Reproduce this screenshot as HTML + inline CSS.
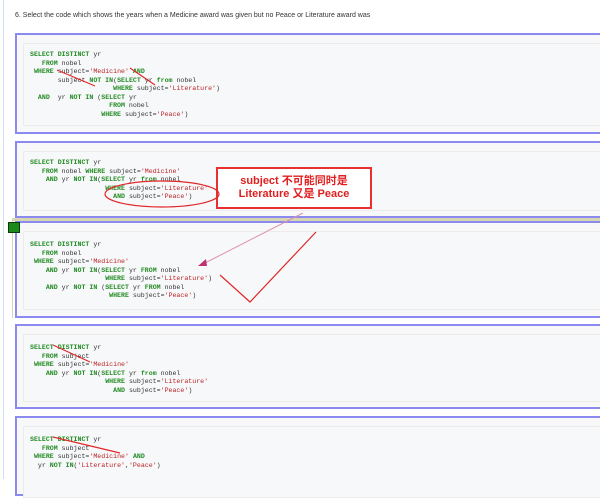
<!DOCTYPE html>
<html><head><meta charset="utf-8"><style>
body{margin:0;width:600px;height:479px;overflow:hidden;background:#fff;position:relative;font-family:"Liberation Sans",sans-serif}
.vl{position:absolute;left:3px;top:0;width:1px;height:479px;background:#cfe0f0}
.q{position:absolute;left:15px;top:12px;font-size:7px;color:#333}
.box{position:absolute;left:15px;width:600px;border:2px solid #8a8af0;background:#f8f8f8;box-sizing:border-box}
.in{position:absolute;left:6px;right:0;background:#f7f8fa;border:1px solid #ececec}
pre{margin:0;position:absolute;left:13px;font-family:"Liberation Mono",monospace;font-size:6.6px;line-height:8.5px;color:#333}
.k{color:#228b22;font-weight:bold}.s{color:#b22}
</style></head><body>
<div class="vl"></div>
<div class="q">6. Select the code which shows the years when a Medicine award was given but no Peace or Literature award was</div>

<div class="box" style="top:33px;height:101px"><div class="in" style="top:8px;height:81px"></div>
<pre style="top:16px"><span class="k">SELECT DISTINCT</span> yr
   <span class="k">FROM</span> nobel
 <span class="k">WHERE</span> subject=<span class="s">'Medicine'</span> <span class="k">AND</span>
       subject <span class="k">NOT IN</span>(<span class="k">SELECT</span> yr <span class="k">from</span> nobel
                     <span class="k">WHERE</span> subject=<span class="s">'Literature'</span>)
  <span class="k">AND</span>  yr <span class="k">NOT IN</span> (<span class="k">SELECT</span> yr
                    <span class="k">FROM</span> nobel
                  <span class="k">WHERE</span> subject=<span class="s">'Peace'</span>)</pre></div>

<div class="box" style="top:141px;height:77px"><div class="in" style="top:8px;height:58px"></div>
<pre style="top:16px"><span class="k">SELECT DISTINCT</span> yr
   <span class="k">FROM</span> nobel <span class="k">WHERE</span> subject=<span class="s">'Medicine'</span>
    <span class="k">AND</span> yr <span class="k">NOT IN</span>(<span class="k">SELECT</span> yr <span class="k">from</span> nobel
                   <span class="k">WHERE</span> subject=<span class="s">'Literature'</span>
                     <span class="k">AND</span> subject=<span class="s">'Peace'</span>)</pre></div>

<div style="position:absolute;left:12px;top:218px;width:600px;height:3px;background:#d6d6b0"></div>
<div class="box" style="top:221px;height:97px"><div class="in" style="top:8px;height:77px"></div>
<pre style="top:18px"><span class="k">SELECT DISTINCT</span> yr
   <span class="k">FROM</span> nobel
 <span class="k">WHERE</span> subject=<span class="s">'Medicine'</span>
    <span class="k">AND</span> yr <span class="k">NOT IN</span>(<span class="k">SELECT</span> yr <span class="k">FROM</span> nobel
                   <span class="k">WHERE</span> subject=<span class="s">'Literature'</span>)
    <span class="k">AND</span> yr <span class="k">NOT IN</span> (<span class="k">SELECT</span> yr <span class="k">FROM</span> nobel
                    <span class="k">WHERE</span> subject=<span class="s">'Peace'</span>)</pre></div>
<div style="position:absolute;left:12px;top:218px;width:1px;height:100px;background:#d6d6b0"></div>
<div style="position:absolute;left:8px;top:222px;width:12px;height:11px;background:#1a8a1a;border:1px solid #0b3b0b;box-sizing:border-box"></div>

<div class="box" style="top:324px;height:85px"><div class="in" style="top:8px;height:66px"></div>
<pre style="top:18px"><span class="k">SELECT DISTINCT</span> yr
   <span class="k">FROM</span> subject
 <span class="k">WHERE</span> subject=<span class="s">'Medicine'</span>
    <span class="k">AND</span> yr <span class="k">NOT IN</span>(<span class="k">SELECT</span> yr <span class="k">from</span> nobel
                   <span class="k">WHERE</span> subject=<span class="s">'Literature'</span>
                     <span class="k">AND</span> subject=<span class="s">'Peace'</span>)</pre></div>

<div class="box" style="top:416px;height:80px"><div class="in" style="top:8px;height:70px"></div>
<pre style="top:18px"><span class="k">SELECT DISTINCT</span> yr
   <span class="k">FROM</span> subject
 <span class="k">WHERE</span> subject=<span class="s">'Medicine'</span> <span class="k">AND</span>
  yr <span class="k">NOT IN</span>(<span class="s">'Literature'</span>,<span class="s">'Peace'</span>)</pre></div>

<div style="position:absolute;left:216px;top:167px;width:156px;height:42px;border:2px solid #e83030;background:#fff;box-sizing:border-box;color:#e02020;font-weight:bold;font-size:11px;line-height:13px;text-align:center;padding-top:6px;font-family:'Liberation Sans','Noto Sans CJK SC',sans-serif">subject 不可能同时是<br>Literature 又是 Peace</div>

<svg style="position:absolute;left:0;top:0" width="600" height="479">
<g stroke="#e02828" stroke-width="1.2" fill="none">
<line x1="57" y1="70" x2="95" y2="86"/><line x1="130" y1="68" x2="155" y2="85"/>
<ellipse cx="162" cy="194" rx="57" ry="13"/>
<polyline points="220,275 250,302 316,232"/>
<line x1="53" y1="345" x2="90" y2="362"/><line x1="53" y1="437" x2="120" y2="453"/>
</g>
<line x1="303" y1="213" x2="203" y2="264" stroke="#e090b0" stroke-width="1"/>
<polygon points="198,266 206,259 207,266" fill="#c03070"/>
</svg>
</body></html>
